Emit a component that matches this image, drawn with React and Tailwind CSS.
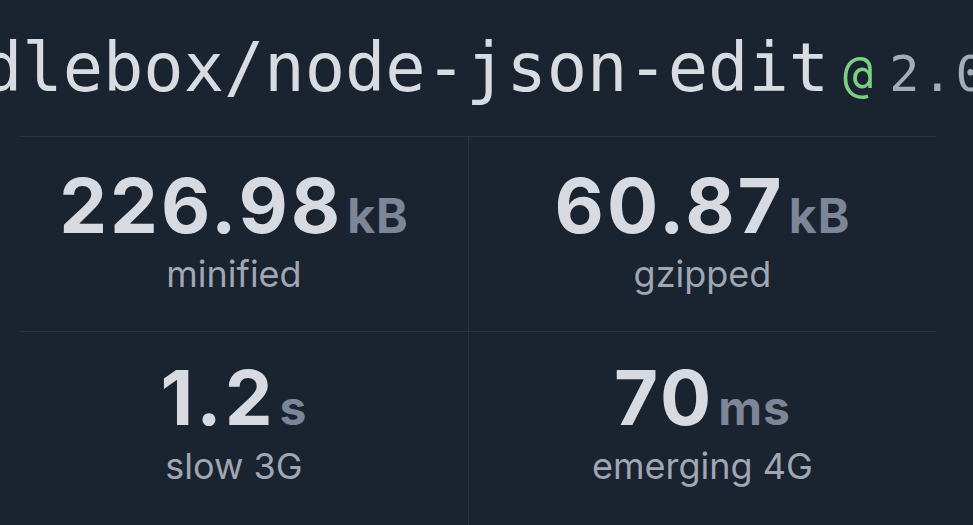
import React from "react";

function Stat({ value, unit, label, pt }) {
  return (
    <div className={`flex flex-col items-center ${pt}`}>
      <div className="flex items-baseline leading-none">
        <span className="text-[76px] font-bold text-[#d7dae0] tracking-[3px]">{value}</span>
        <span className="ml-[4px] text-[48px] font-bold text-[#7c8698] tracking-[1px]">{unit}</span>
      </div>
      <div className="mt-[13px] text-[36px] leading-none text-[#a0a7b2]">{label}</div>
    </div>
  );
}

export default function App() {
  return (
    <div
      className="w-[973px] h-[525px] overflow-hidden bg-[#1a2330]"
      style={{ fontFamily: "Inter, 'Noto Sans', sans-serif" }}
    >
      <div
        className="pt-[35px] ml-[-18px] flex items-baseline whitespace-nowrap leading-none"
        style={{ fontFamily: "'DejaVu Sans Mono', monospace" }}
      >
        <span className="text-[67px] text-[#d8dbe0]">dlebox/node-json-edit</span>
        <span className="ml-[14px] text-[50px] text-[#7dcd84]">@</span>
        <span className="ml-[16px] text-[50px] text-[#a6acb5] tracking-[3px]">2.0.5</span>
      </div>
      <div className="mt-[34px] w-[936px]">
        <div className="ml-[19px] h-px bg-[#29333f]" />
        <div className="grid grid-cols-2 h-[194px]">
          <Stat value="226.98" unit="kB" label="minified" pt="pt-[30px]" />
          <div className="border-l border-[#29333f]">
            <Stat value="60.87" unit="kB" label="gzipped" pt="pt-[30px]" />
          </div>
        </div>
        <div className="ml-[19px] h-px bg-[#29333f]" />
        <div className="grid grid-cols-2 h-[200px]">
          <Stat value="1.2" unit="s" label="slow 3G" pt="pt-[27px]" />
          <div className="border-l border-[#29333f]">
            <Stat value="70" unit="ms" label="emerging 4G" pt="pt-[27px]" />
          </div>
        </div>
      </div>
    </div>
  );
}
